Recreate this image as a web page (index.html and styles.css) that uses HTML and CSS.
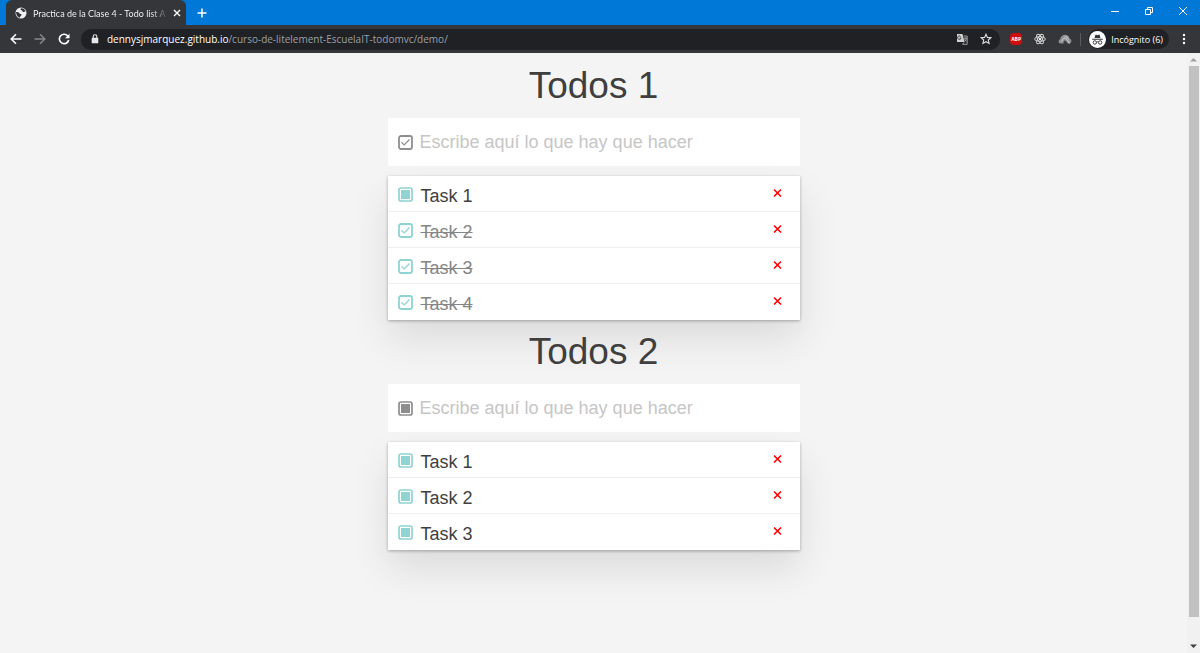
FILE: index.html
```html
<!DOCTYPE html>
<html lang="es">
<head>
<meta charset="utf-8">
<title>Practica de la Clase 4 - Todo list</title>
<link rel="stylesheet" href="styles.css">
</head>
<body>
<svg class="defs" aria-hidden="true">
  <symbol id="box-check" viewBox="0 0 15 15"><rect x="1" y="1" width="13" height="13" rx="2" fill="none" stroke="currentColor" stroke-width="1.800"/><path d="M3.500 7.300l2.700 2.600 5.300-5.400" fill="none" stroke="currentColor" stroke-width="1.200"/></symbol>
  <symbol id="box-fill" viewBox="0 0 15 15"><rect x="1" y="1" width="13" height="13" rx="2" fill="none" stroke="currentColor" stroke-width="1.700"/><rect x="3" y="3" width="9" height="9" fill="currentColor"/></symbol>
  <symbol id="cross" viewBox="0 0 10 10"><path d="M2 1.500l7 7M9 1.500l-7 7" fill="none" stroke="currentColor" stroke-width="1.600"/></symbol>
</svg>
<header class="browser">
  <div class="tabs">
    <div class="tab">
      <svg class="globe" viewBox="0 0 12 12"><circle cx="6" cy="6" r="5.500" fill="#f1f1f1"/><path d="M1 5c2 0 3 .4 3.600 1.400.6.900 2 .3 2 1.400 0 1-1.600 1-1.600 3C2.800 10.500 1.200 8.500 1 5zM6 1.300c-.8 1-.5 1.800.5 2 1.200.2.600 1.500 1.700 1.700 1.200.2 1.200-.8 2.400-.4C10.200 2.800 8.400 1.200 6 1.300z" fill="#35363a"/></svg>
      <span class="tab-title">Practica de la Clase 4 - Todo list A</span>
      <button class="icon-btn" aria-label="Cerrar pestaña"><svg class="close" viewBox="0 0 10 10"><path d="M2 2l6 6M8 2l-6 6" stroke="#fff" stroke-width="1.400"/></svg></button>
    </div>
    <button class="icon-btn new-tab" aria-label="Nueva pestaña"><svg class="plus" viewBox="0 0 10 10"><path d="M5 .5v9M.5 5h9" stroke="#fff" stroke-width="1.500"/></svg></button>
    <div class="window-buttons">
      <button class="icon-btn" aria-label="Minimizar"><svg class="win" viewBox="0 0 10 10"><path d="M1 5.500h8" stroke="#fff"/></svg></button>
      <button class="icon-btn" aria-label="Restaurar"><svg class="win" viewBox="0 0 10 10"><path d="M1.500 3.500h5v5h-5zM3.500 3V1.500h5v5H7" fill="none" stroke="#fff"/></svg></button>
      <button class="icon-btn" aria-label="Cerrar"><svg class="win" viewBox="0 0 10 10"><path d="M1 1l8 8M9 1L1 9" stroke="#fff"/></svg></button>
    </div>
  </div>
  <div class="toolbar">
    <button class="icon-btn" aria-label="Atrás"><svg class="nav" viewBox="0 0 12 12"><path d="M11.500 6H1.500M6 1.200L1.200 6 6 10.800" fill="none" stroke="#fff" stroke-width="1.500"/></svg></button>
    <button class="icon-btn" aria-label="Adelante"><svg class="nav" viewBox="0 0 12 12"><path d="M.5 6h10M6 1.200L10.800 6 6 10.800" fill="none" stroke="#85868a" stroke-width="1.500"/></svg></button>
    <button class="icon-btn" aria-label="Recargar"><svg class="nav" viewBox="0 0 12 12"><path d="M10 3.300A4.700 4.700 0 1 0 10.700 7" fill="none" stroke="#fff" stroke-width="1.600"/><path d="M11.500.7v4.500H7z" fill="#fff"/></svg></button>
    <div class="address">
      <svg class="lock" viewBox="0 0 8 10"><rect x=".7" y="3.800" width="6.600" height="5.500" rx=".6" fill="#e8e8e8"/><path d="M2.200 4V2.600a1.800 1.800 0 0 1 3.600 0V4" fill="none" stroke="#e8e8e8" stroke-width="1.100"/></svg>
      <a class="url" href="#todos"><span class="host">dennysjmarquez.github.io</span>/curso-de-litelement-EscuelaIT-todomvc/demo/</a>
      <button class="icon-btn" aria-label="Traducir"><svg class="nav" viewBox="0 0 12 12"><path d="M1 1h5.500l2 8H1z" fill="#d0d0d0"/><path d="M5 4.800a1.700 1.700 0 1 1-.5-1.400M3.700 5H5" fill="none" stroke="#35363a" stroke-width=".9"/><path d="M7.500 3h3.700v8.300H6.500L8 9.500M8 5.200h3M9.300 4.300v1M10.500 5.500c-.4 1.400-1.100 2.300-2.100 3M8.500 6.300c.5 1 1.100 1.600 2 2.200" fill="none" stroke="#bbb" stroke-width=".8"/></svg></button>
      <button class="icon-btn" aria-label="Favorito"><svg class="nav" viewBox="0 0 12 12"><path d="M6 1.200l1.400 3.200 3.500.3-2.600 2.300.8 3.500L6 8.700l-3.100 1.800.8-3.500L1.100 4.700l3.500-.3z" fill="none" stroke="#ddd" stroke-width="1.100"/></svg></button>
    </div>
    <button class="icon-btn abp" aria-label="Adblock Plus">ABP</button>
    <button class="icon-btn" aria-label="React"><svg class="nav" viewBox="0 0 12 12"><g fill="none" stroke="#ddd" stroke-width=".9"><ellipse cx="6" cy="6" rx="5.300" ry="2.200"/><ellipse cx="6" cy="6" rx="5.300" ry="2.200" transform="rotate(60 6 6)"/><ellipse cx="6" cy="6" rx="5.300" ry="2.200" transform="rotate(120 6 6)"/></g><circle cx="6" cy="6" r="1.200" fill="#eee"/></svg></button>
    <button class="icon-btn" aria-label="Extensión"><svg class="cloud" viewBox="0 0 14 12"><path d="M2.500 10.500a2.200 2.200 0 0 1-.3-4.300C2.600 3 5 1.500 7.500 1.700c2.600.2 3.700 1.800 4 3.800 2.600.7 2.500 4.600-.2 5H9L6.800 7.800l-1 2.700z" fill="#909194"/><path d="M4 8.500c-.5-3 3.500-4.500 5-1.500l2.500 3.500M6.500 4c2-1 3.500.5 4 2.500" fill="none" stroke="#cfcfd1" stroke-width="1"/><path d="M6 10.500c-.5-2 .5-3 1.500-2.500l2 2.500" fill="none" stroke="#35363a" stroke-width="1"/></svg></button>
    <span class="divider"></span>
    <button class="profile"><svg class="incognito" viewBox="0 0 16 16"><circle cx="8" cy="8" r="8" fill="#fff"/><path d="M5.200 6.500L6 3.600h1.200l.8.3.8-.3H10l.8 2.900zM3 7.300h10v.9H3z" fill="#35363a"/><g fill="none" stroke="#35363a" stroke-width=".9"><circle cx="5.500" cy="10.800" r="1.600"/><circle cx="10.500" cy="10.800" r="1.600"/><path d="M7.100 10.500q.9-.7 1.800 0"/></g></svg>Incógnito (6)</button>
    <button class="icon-btn" aria-label="Menú"><svg class="nav" viewBox="0 0 12 12" fill="#fff"><circle cx="6" cy="2" r="1.200"/><circle cx="6" cy="6" r="1.200"/><circle cx="6" cy="10" r="1.200"/></svg></button>
  </div>
</header>
<div class="viewport">
  <main class="page" id="todos">
    <section class="todo">
      <h1 class="title">Todos 1</h1>
      <div class="entry">
        <label class="check muted"><input type="checkbox" checked aria-label="Marcar todas"><svg><use href="#box-check"/></svg></label>
        <input class="new-task" type="text" placeholder="Escribe aquí lo que hay que hacer" aria-label="Nueva tarea">
      </div>
      <ul class="list">
        <li class="item"><label class="check"><input type="checkbox"><svg><use href="#box-fill"/></svg><span class="name">Task 1</span></label><button class="delete" aria-label="Borrar"><svg><use href="#cross"/></svg></button></li>
        <li class="item done"><label class="check"><input type="checkbox" checked><svg><use href="#box-check"/></svg><span class="name">Task 2</span></label><button class="delete" aria-label="Borrar"><svg><use href="#cross"/></svg></button></li>
        <li class="item done"><label class="check"><input type="checkbox" checked><svg><use href="#box-check"/></svg><span class="name">Task 3</span></label><button class="delete" aria-label="Borrar"><svg><use href="#cross"/></svg></button></li>
        <li class="item done"><label class="check"><input type="checkbox" checked><svg><use href="#box-check"/></svg><span class="name">Task 4</span></label><button class="delete" aria-label="Borrar"><svg><use href="#cross"/></svg></button></li>
      </ul>
    </section>
    <section class="todo">
      <h1 class="title">Todos 2</h1>
      <div class="entry">
        <label class="check muted"><input type="checkbox" aria-label="Marcar todas"><svg><use href="#box-fill"/></svg></label>
        <input class="new-task" type="text" placeholder="Escribe aquí lo que hay que hacer" aria-label="Nueva tarea">
      </div>
      <ul class="list">
        <li class="item"><label class="check"><input type="checkbox"><svg><use href="#box-fill"/></svg><span class="name">Task 1</span></label><button class="delete" aria-label="Borrar"><svg><use href="#cross"/></svg></button></li>
        <li class="item"><label class="check"><input type="checkbox"><svg><use href="#box-fill"/></svg><span class="name">Task 2</span></label><button class="delete" aria-label="Borrar"><svg><use href="#cross"/></svg></button></li>
        <li class="item"><label class="check"><input type="checkbox"><svg><use href="#box-fill"/></svg><span class="name">Task 3</span></label><button class="delete" aria-label="Borrar"><svg><use href="#cross"/></svg></button></li>
      </ul>
    </section>
  </main>
  <div class="scrollbar">
    <svg class="arrow" viewBox="0 0 7 5"><path d="M0 4.500L3.500 1 7 4.500z" fill="#a0a0a0"/></svg>
    <span class="thumb"></span>
    <svg class="arrow" viewBox="0 0 7 5"><path d="M0 .5L3.500 4 7 .5z" fill="#404040"/></svg>
  </div>
</div>
</body>
</html>
```

FILE: styles.css
```css
* { box-sizing: border-box; }
body {
  margin: 0;
  min-height: 100vh;
  display: flex;
  flex-direction: column;
  background: #f4f4f4;
  color: #3f3f3f;
  font-family: "Liberation Sans", Arial, sans-serif;
}
button { border: 0; background: none; padding: 0; font: inherit; color: inherit; }
svg { display: block; flex: none; }
.defs { position: absolute; width: 0; height: 0; }

/* Browser frame */
.browser { font-family: "Open Sans", "Noto Sans", sans-serif; color: #fff; }
.icon-btn { display: grid; place-items: center; flex: none; }
.tabs { display: flex; height: 25px; background: #0078d7; padding-left: 6px; }
.tab {
  width: 180px;
  display: flex;
  align-items: center;
  gap: 6px;
  padding: 1px 7px 0 9px;
  background: #35363a;
  border-radius: 6px 6px 0 0;
  font-family: Lato, "Open Sans", sans-serif;
  font-size: 9px;
}
.globe { width: 12px; height: 12px; }
.tab-title {
  flex: 1;
  white-space: nowrap;
  background: linear-gradient(to right, #fff 88%, #55565a);
  -webkit-background-clip: text;
  background-clip: text;
  color: transparent;
}
.close, .plus, .win { width: 10px; height: 10px; }
.new-tab { margin-left: 11px; }
.window-buttons { margin-left: auto; display: flex; gap: 24px; padding: 0 12px 3px 0; }
.toolbar {
  display: flex;
  align-items: center;
  gap: 12px;
  height: 28px;
  padding: 0 10px;
  background: #35363a;
}
.nav { width: 12px; height: 12px; }
.cloud { width: 14px; height: 12px; }
.address {
  flex: 1;
  display: flex;
  align-items: center;
  gap: 12px;
  height: 21px;
  margin-left: -1px;
  margin-right: -2px;
  padding: 0 8px 0 10px;
  border-radius: 10px;
  background: #202124;
}
.lock { width: 8px; height: 10px; margin-right: -4px; }
.url { flex: 1; font-size: 10px; color: #9aa0a6; text-decoration: none; white-space: nowrap; }
.host { color: #fff; }
.abp {
  width: 12px;
  height: 12px;
  border-radius: 4px;
  background: #d00d0d;
  font-size: 5px;
  font-weight: bold;
}
.divider { width: 1px; height: 13px; background: #5a5b5f; margin: 0 -5px 0 -4px; }
.profile {
  display: flex;
  align-items: center;
  gap: 5px;
  height: 20px;
  padding: 0 6px 0 1px;
  border-radius: 10px;
  background: #202124;
  font-size: 9px;
  white-space: nowrap;
  margin-right: -3px;
}
.incognito { width: 17px; height: 17px; }

/* Page area */
.viewport { flex: 1; display: flex; }
.page { flex: 1; padding-top: 1px; }
.todo { width: 100%; max-width: 412px; margin: 0 auto; }
.title { margin: 0; font-size: 37px; line-height: 64px; font-weight: normal; text-align: center; }
.entry {
  display: flex;
  align-items: center;
  gap: 7px;
  height: 48px;
  padding: 0 10px;
  background: #fff;
}
.check { position: relative; display: flex; align-items: center; gap: 8px; color: #8fd3d3; }
.check svg { width: 15px; height: 15px; }
.check input { position: absolute; left: 0; width: 15px; height: 15px; margin: 0; opacity: 0; }
.muted { color: #8e8e8e; }
.new-task { flex: 1; min-width: 0; border: 0; padding: 1px 0 0; background: none; font: inherit; font-size: 18px; outline: 0; }
.new-task::placeholder { color: #c6c6c6; }
.list {
  list-style: none;
  margin: 10px 0 0;
  padding: 0;
  background: #fff;
  box-shadow: 0 1px 3px rgba(0, 0, 0, .3), 0 19px 38px rgba(0, 0, 0, .1);
}
.item { display: flex; align-items: center; justify-content: space-between; height: 36px; padding: 1px 18px 0 10px; border-bottom: 1px solid #eee; }
.item:last-child { border-bottom-color: #fff; }
.name { padding-top: 3px; font-size: 18px; line-height: 24px; color: #3f3f3f; }
.done .name { color: #858585; text-decoration: line-through; }
.delete { color: #f00; padding-bottom: 2px; }
.delete svg { width: 10px; height: 10px; }

.scrollbar {
  width: 13px;
  display: flex;
  flex-direction: column;
  align-items: center;
  gap: 4px;
  padding: 4px 0;
  background: #f1f1f1;
}
.arrow { width: 7px; height: 5px; }
.thumb { width: 10px; flex: 1; margin-bottom: 23px; background: #c1c1c1; }
```
